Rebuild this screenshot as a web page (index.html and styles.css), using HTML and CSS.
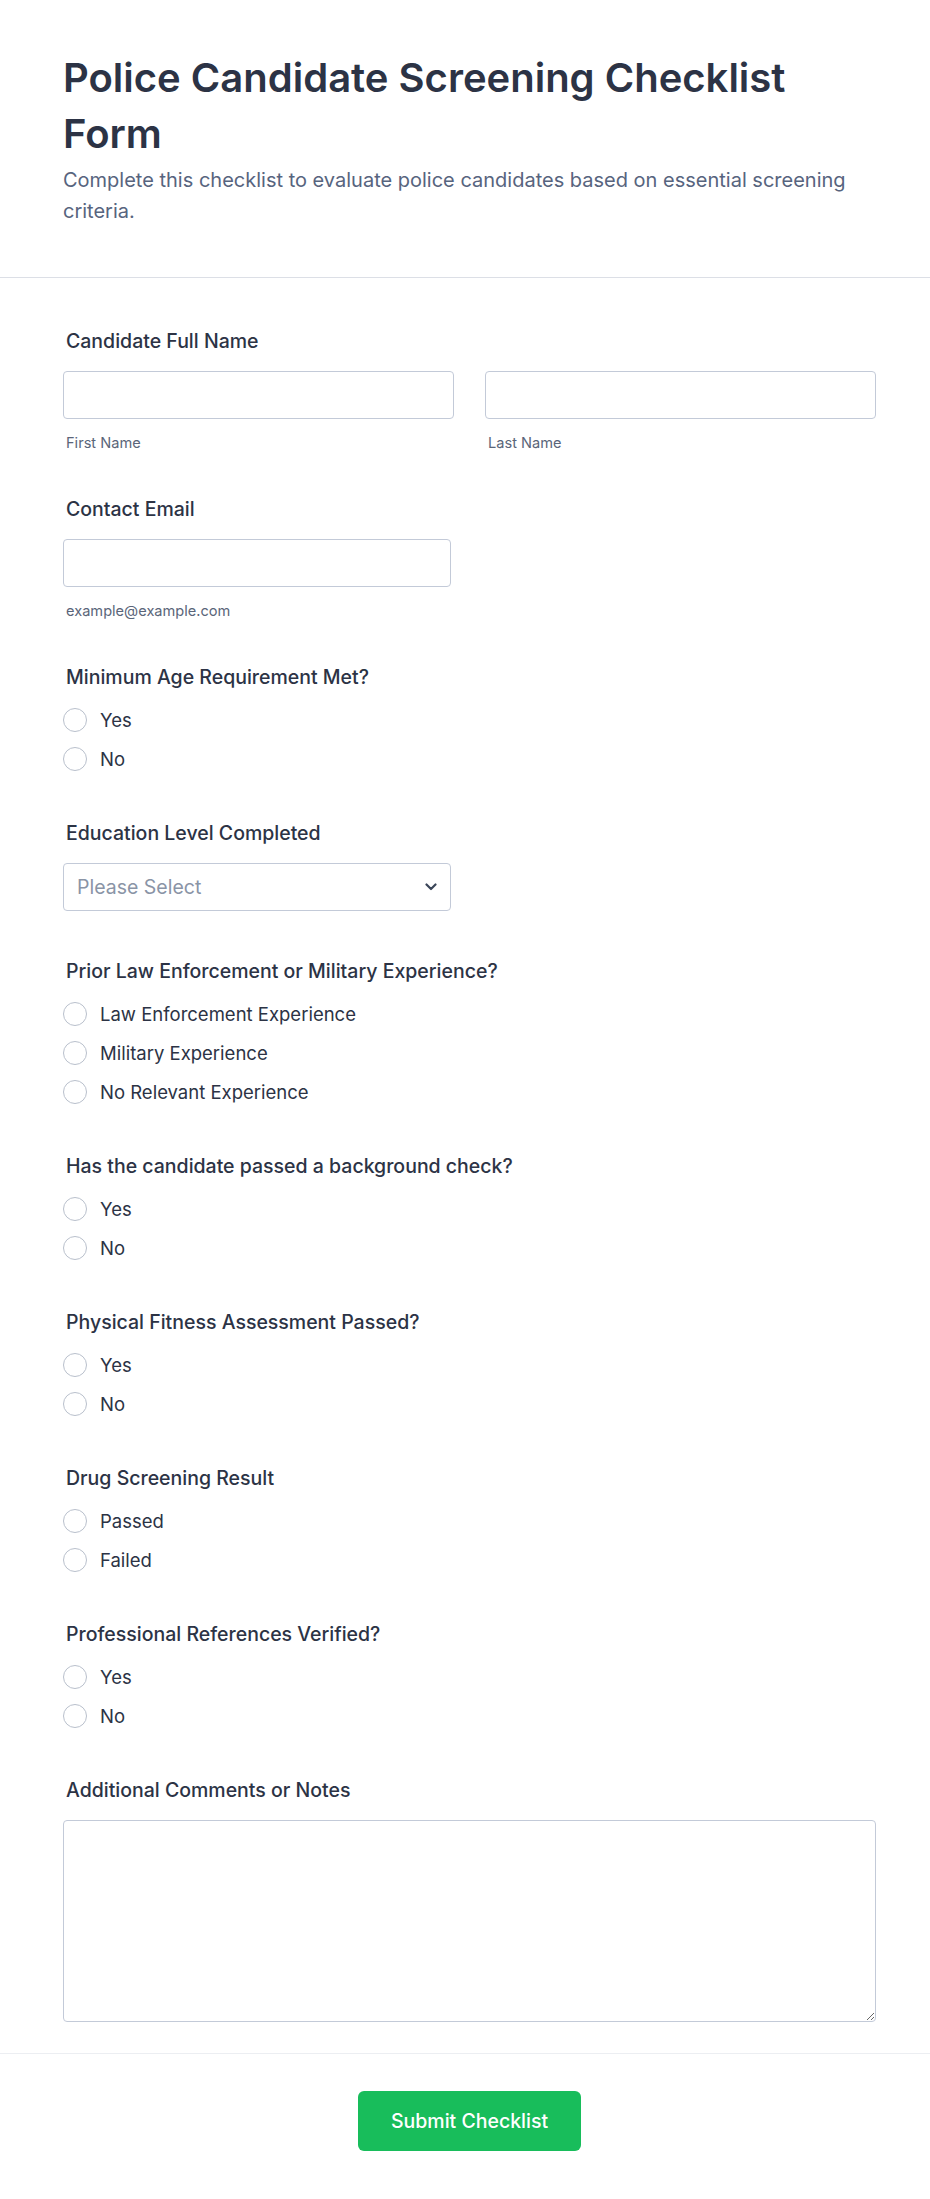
FILE: index.html
```html
<!DOCTYPE html>
<html lang="en">
<head>
    <meta charset="UTF-8">
    <meta name="viewport" content="width=device-width, initial-scale=1.0">
    <title>Police Candidate Screening Checklist Form</title>
    <link rel="stylesheet" href="styles.css">
</head>
<body>
    <form class="form">
        <div class="form-header">
            <h1>Police Candidate Screening Checklist Form</h1>
            <p class="subtitle">Complete this checklist to evaluate police candidates based on essential screening criteria.</p>
        </div>

        <div class="form-body">
            <div class="field">
                <label class="field-label">Candidate Full Name</label>
                <div class="name-row">
                    <div class="name-part">
                        <input type="text" class="text-input" name="first_name">
                        <span class="sublabel">First Name</span>
                    </div>
                    <div class="name-part">
                        <input type="text" class="text-input" name="last_name">
                        <span class="sublabel">Last Name</span>
                    </div>
                </div>
            </div>

            <div class="field">
                <label class="field-label">Contact Email</label>
                <input type="email" class="text-input half" name="email">
                <span class="sublabel">example@example.com</span>
            </div>

            <div class="field field-choice">
                <label class="field-label">Minimum Age Requirement Met?</label>
                <div class="options">
                    <label class="option"><input type="radio" name="age"><span>Yes</span></label>
                    <label class="option"><input type="radio" name="age"><span>No</span></label>
                </div>
            </div>

            <div class="field field-select">
                <label class="field-label">Education Level Completed</label>
                <div class="select-wrap half">
                    <select class="select-input" name="education">
                        <option value="">Please Select</option>
                        <option>High School Diploma / GED</option>
                        <option>Associate Degree</option>
                        <option>Bachelor's Degree</option>
                        <option>Master's Degree or Higher</option>
                    </select>
                    <svg class="select-arrow" width="12" height="8" viewBox="0 0 12 8">
                        <path d="M1.5 1.5 L6 6 L10.5 1.5" fill="none" stroke="#3b4659" stroke-width="2.2" stroke-linecap="round" stroke-linejoin="round"/>
                    </svg>
                </div>
            </div>

            <div class="field field-choice">
                <label class="field-label">Prior Law Enforcement or Military Experience?</label>
                <div class="options">
                    <label class="option"><input type="radio" name="experience"><span>Law Enforcement Experience</span></label>
                    <label class="option"><input type="radio" name="experience"><span>Military Experience</span></label>
                    <label class="option"><input type="radio" name="experience"><span>No Relevant Experience</span></label>
                </div>
            </div>

            <div class="field field-choice">
                <label class="field-label">Has the candidate passed a background check?</label>
                <div class="options">
                    <label class="option"><input type="radio" name="background"><span>Yes</span></label>
                    <label class="option"><input type="radio" name="background"><span>No</span></label>
                </div>
            </div>

            <div class="field field-choice">
                <label class="field-label">Physical Fitness Assessment Passed?</label>
                <div class="options">
                    <label class="option"><input type="radio" name="fitness"><span>Yes</span></label>
                    <label class="option"><input type="radio" name="fitness"><span>No</span></label>
                </div>
            </div>

            <div class="field field-choice">
                <label class="field-label">Drug Screening Result</label>
                <div class="options">
                    <label class="option"><input type="radio" name="drug"><span>Passed</span></label>
                    <label class="option"><input type="radio" name="drug"><span>Failed</span></label>
                </div>
            </div>

            <div class="field field-choice">
                <label class="field-label">Professional References Verified?</label>
                <div class="options">
                    <label class="option"><input type="radio" name="references"><span>Yes</span></label>
                    <label class="option"><input type="radio" name="references"><span>No</span></label>
                </div>
            </div>

            <div class="field field-last">
                <label class="field-label">Additional Comments or Notes</label>
                <textarea class="textarea-input" name="comments"></textarea>
            </div>
        </div>

        <div class="form-footer">
            <button type="submit" class="btn-submit">Submit Checklist</button>
        </div>
    </form>
</body>
</html>
```

FILE: styles.css
```css
* {
    margin: 0;
    padding: 0;
    box-sizing: border-box;
}

body {
    font-family: Inter, 'Noto Sans', sans-serif;
    background: #ffffff;
    color: #2c3345;
}

.form-header {
    padding: 50px 63px 50px 63px;
    border-bottom: 1px solid #dcdfe6;
}

.form-header h1 {
    font-size: 40px;
    line-height: 56px;
    font-weight: 600;
    color: #2c3345;
}

.subtitle {
    margin-top: 3px;
    font-size: 20px;
    line-height: 31px;
    color: #57647e;
}

.form-body {
    padding: 51px 54px 31px 63px;
    border-bottom: 1px solid #eceef2;
}

.field {
    margin-bottom: 44px;
}

.field-choice {
    margin-bottom: 43px;
}

.field-select {
    margin-bottom: 48px;
}

.field-last {
    margin-bottom: 0;
}

.field-label {
    display: block;
    padding-left: 3px;
    font-size: 19.5px;
    line-height: 24px;
    font-weight: 500;
    color: #2c3345;
    margin-bottom: 18px;
}

.field-choice .field-label {
    margin-bottom: 11px;
}

.name-row {
    display: grid;
    grid-template-columns: 1fr 1fr;
    gap: 31px;
}

.text-input,
.select-input,
.textarea-input {
    display: block;
    width: 100%;
    height: 48px;
    border: 1px solid #c3cad8;
    border-radius: 4px;
    background: #ffffff;
    font-family: inherit;
    font-size: 19.5px;
    color: #2c3345;
    padding: 0 13px;
    outline: none;
}

.half {
    width: 388px;
}

.sublabel {
    display: block;
    padding-left: 3px;
    margin-top: 14px;
    font-size: 14.6px;
    line-height: 20px;
    color: #5a6579;
}

.options {
    display: flex;
    flex-direction: column;
}

.option {
    display: flex;
    align-items: center;
    height: 39px;
    gap: 13px;
    font-size: 18.5px;
    color: #2c3345;
    cursor: pointer;
}

.option input {
    appearance: none;
    -webkit-appearance: none;
    width: 24px;
    height: 24px;
    border: 1.5px solid #b9c0cc;
    border-radius: 50%;
    background: #ffffff;
    flex-shrink: 0;
    cursor: pointer;
}

.option input:checked {
    border: 7px solid #2e69ff;
}

.select-wrap {
    position: relative;
}

.select-input {
    appearance: none;
    -webkit-appearance: none;
    color: #8a94a6;
    cursor: pointer;
}

.select-arrow {
    position: absolute;
    right: 14px;
    top: 20px;
    pointer-events: none;
}

.textarea-input {
    height: 202px;
    padding: 12px 14px;
    resize: vertical;
}

.form-footer {
    display: flex;
    justify-content: center;
    padding: 37px 54px 48px 63px;
}

.btn-submit {
    width: 223px;
    height: 60px;
    background: #18bd5b;
    color: #ffffff;
    border: none;
    border-radius: 6px;
    font-family: inherit;
    font-size: 19.5px;
    font-weight: 500;
    cursor: pointer;
}

.btn-submit:hover {
    background: #16aa52;
}
```
